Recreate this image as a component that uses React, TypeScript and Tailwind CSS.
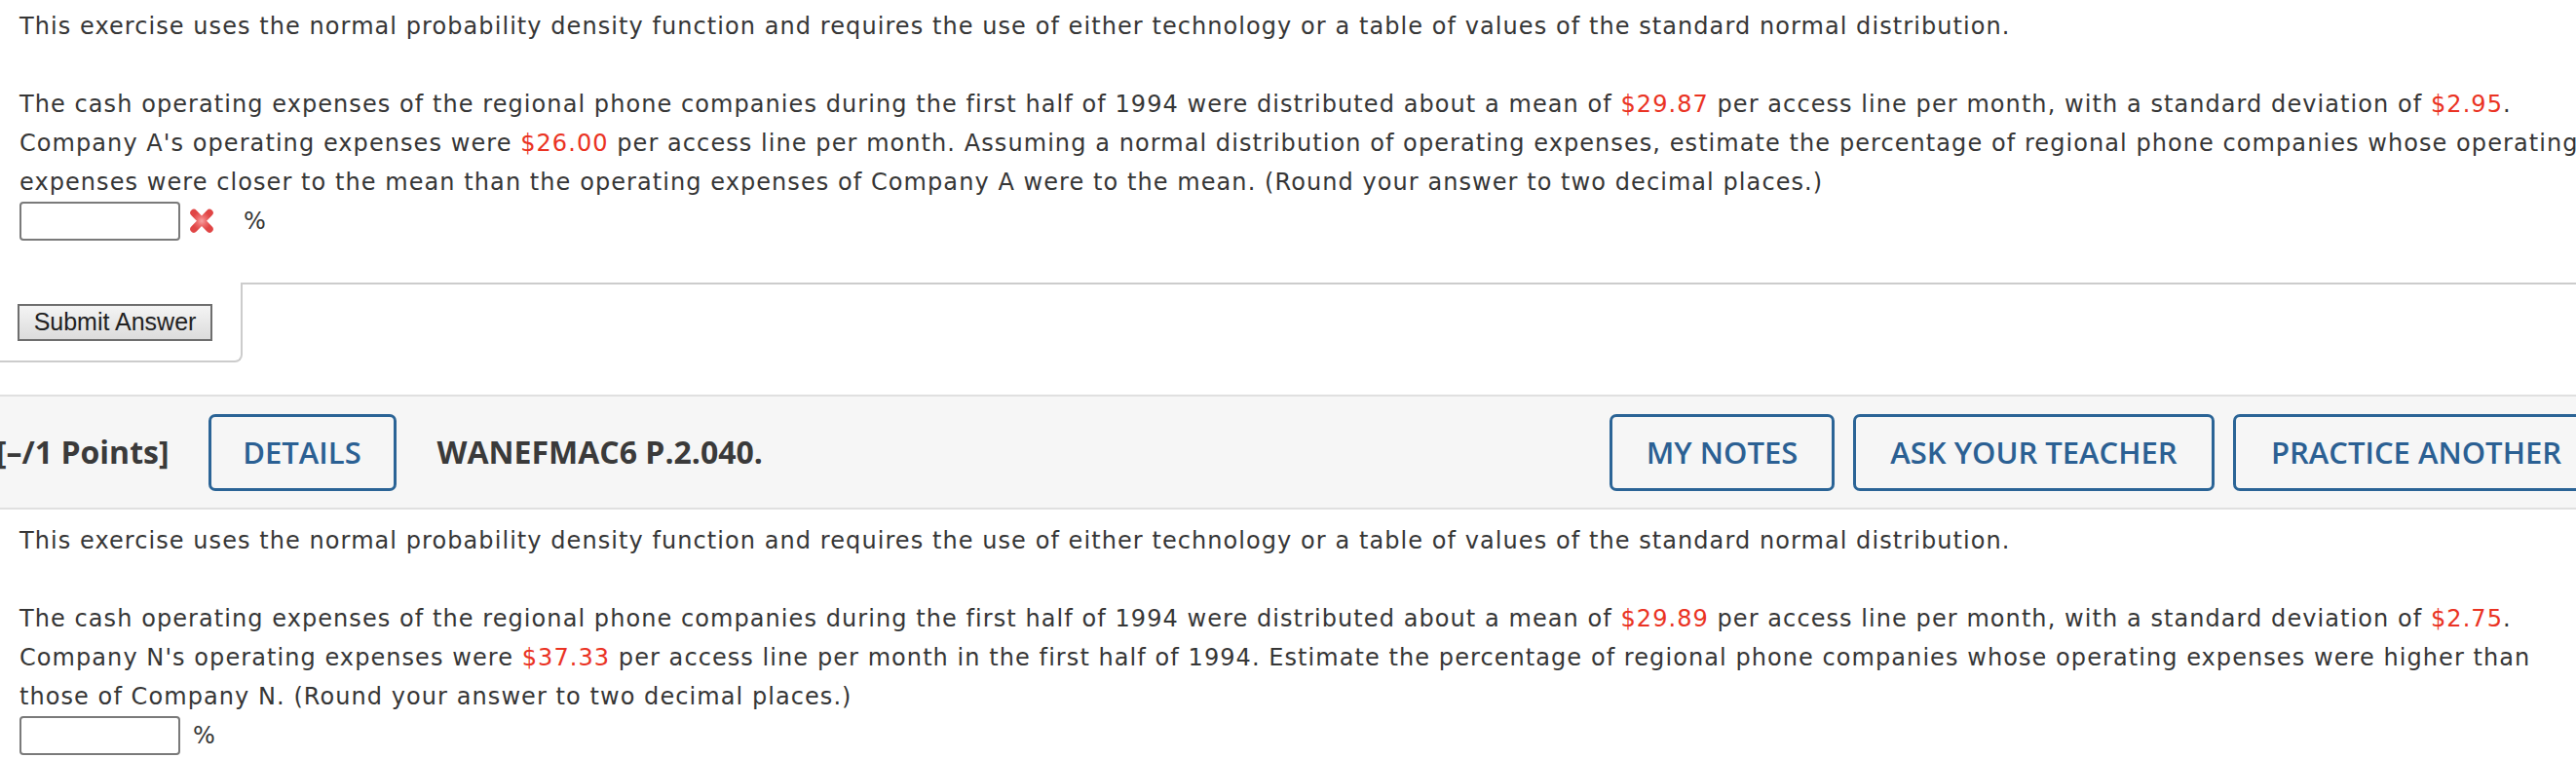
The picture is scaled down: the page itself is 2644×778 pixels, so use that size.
import React from "react";

const RED = "text-[#ea3323]";

function XIcon() {
  return (
    <svg width="30" height="28" viewBox="0 0 30 28" className="block">
      <defs>
        <radialGradient id="xg" cx="50%" cy="50%" r="60%">
          <stop offset="0%" stopColor="#f7a3a3" />
          <stop offset="45%" stopColor="#ee6f6f" />
          <stop offset="100%" stopColor="#e04545" />
        </radialGradient>
      </defs>
      <path
        d="M7 5.5 L23 22 M23 5.5 L7 22"
        stroke="url(#xg)"
        strokeWidth="7.5"
        strokeLinecap="round"
        fill="none"
      />
    </svg>
  );
}

function HeaderButton({ label, w }: { label: string; w: string }) {
  return (
    <div
      className={`${w} h-[79px] shrink-0 flex items-center justify-center border-[3px] border-[#2b6496] rounded-[7px] text-[#2b6093] text-[31px] font-semibold whitespace-nowrap`}
    >
      {label}
    </div>
  );
}

export default function App() {
  return (
    <div className="w-[2644px] h-[778px] overflow-hidden bg-white">
      <div className="w-[2700px]">
        {/* Question 1 body */}
        <div
          className="pl-[20px] pt-[7px] text-[24px] leading-[40px] tracking-[1.07px] text-[#363636]"
          style={{ fontFamily: "Verdana, 'DejaVu Sans', sans-serif" }}
        >
          <div className="whitespace-nowrap">
            This exercise uses the normal probability density function and requires the use of either technology or a table of values of the standard normal distribution.
          </div>
          <div className="h-[40px]" />
          <div className="whitespace-nowrap">
            The cash operating expenses of the regional phone companies during the first half of 1994 were distributed about a mean of{" "}
            <span className={RED}>$29.87</span> per access line per month, with a standard deviation of{" "}
            <span className={RED}>$2.95</span>.
          </div>
          <div className="whitespace-nowrap">
            Company A's operating expenses were <span className={RED}>$26.00</span> per access line per month. Assuming a normal distribution of operating expenses, estimate the percentage of regional phone companies whose operating
          </div>
          <div className="whitespace-nowrap">
            expenses were closer to the mean than the operating expenses of Company A were to the mean. (Round your answer to two decimal places.)
          </div>
          <div className="flex items-center h-[40px]">
            <div className="w-[165px] h-[40px] border-2 border-[#7a7a7a] rounded-[4px] bg-white" />
            <div className="ml-[7px]">
              <XIcon />
            </div>
            <span className="ml-[28px]">%</span>
          </div>
        </div>

        {/* Submit area */}
        <div className="mt-[43px] flex h-[82px]">
          <div className="w-[249px] shrink-0 border-r-2 border-b-2 border-[#cccccc] rounded-br-[8px] pl-[18px] pt-[22px]">
            <div
              className="w-[200px] h-[38px] border-2 border-[#6e6e6e] bg-gradient-to-b from-[#f4f4f4] to-[#dcdcdc] flex items-center justify-center text-[25px] text-[#222] whitespace-nowrap"
              style={{ fontFamily: "'Liberation Sans', Arial, sans-serif" }}
            >
              Submit Answer
            </div>
          </div>
          <div className="flex-1 border-t-2 border-[#cccccc]" />
        </div>

        {/* Header bar for question 2 */}
        <div
          className="mt-[33px] h-[118px] border-y-2 border-[#e0e0e0] bg-[#f6f6f6] flex items-center pr-[32px]"
          style={{ fontFamily: "'Open Sans', sans-serif" }}
        >
          <span className="-ml-[4px] text-[32px] font-bold text-[#3a3a3a] whitespace-nowrap">
            [–/1 Points]
          </span>
          <div className="ml-[40px]">
            <HeaderButton label="DETAILS" w="w-[193px]" />
          </div>
          <span className="ml-[42px] text-[32px] font-bold text-[#3a3a3a] whitespace-nowrap">
            WANEFMAC6 P.2.040.
          </span>
          <div className="ml-auto flex gap-[19px]">
            <HeaderButton label="MY NOTES" w="w-[231px]" />
            <HeaderButton label="ASK YOUR TEACHER" w="w-[371px]" />
            <HeaderButton label="PRACTICE ANOTHER" w="w-[376px]" />
          </div>
        </div>

        {/* Question 2 body */}
        <div
          className="pl-[20px] pt-[12px] text-[24px] leading-[40px] tracking-[1.07px] text-[#363636]"
          style={{ fontFamily: "Verdana, 'DejaVu Sans', sans-serif" }}
        >
          <div className="whitespace-nowrap">
            This exercise uses the normal probability density function and requires the use of either technology or a table of values of the standard normal distribution.
          </div>
          <div className="h-[40px]" />
          <div className="whitespace-nowrap">
            The cash operating expenses of the regional phone companies during the first half of 1994 were distributed about a mean of{" "}
            <span className={RED}>$29.89</span> per access line per month, with a standard deviation of{" "}
            <span className={RED}>$2.75</span>.
          </div>
          <div className="whitespace-nowrap">
            Company N's operating expenses were <span className={RED}>$37.33</span> per access line per month in the first half of 1994. Estimate the percentage of regional phone companies whose operating expenses were higher than
          </div>
          <div className="whitespace-nowrap">
            those of Company N. (Round your answer to two decimal places.)
          </div>
          <div className="flex items-center h-[40px]">
            <div className="w-[165px] h-[40px] border-2 border-[#7a7a7a] rounded-[4px] bg-white" />
            <span className="ml-[13px]">%</span>
          </div>
        </div>
      </div>
    </div>
  );
}
